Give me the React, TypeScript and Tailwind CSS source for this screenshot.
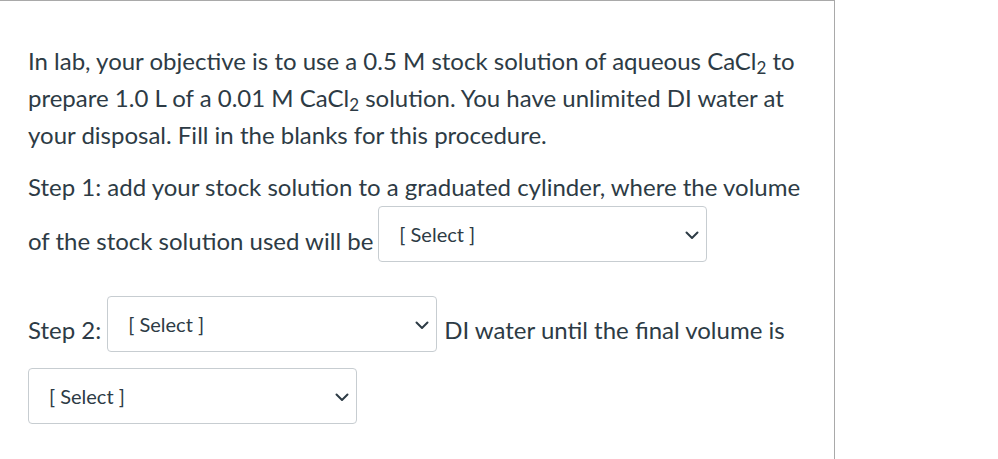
import React from 'react';

// Dropdown placeholder used for each blank in the question
const Blank: React.FC<{ className?: string }> = ({ className = '' }) => (
  <div
    className={`flex h-[56px] w-[329px] shrink-0 items-center justify-between rounded-[4px] border border-[#c7cdd1] bg-white pl-[20px] pr-[7px] text-[20px] leading-none text-[#2d3b45] ${className}`}
  >
    <span>[ Select ]</span>
    <svg width="14" height="9" viewBox="0 0 14 9" fill="none" className="mt-[2px]">
      <path d="M1.5 1.5 L7 7 L12.5 1.5" stroke="#2d3b45" strokeWidth="2" strokeLinecap="round" strokeLinejoin="round" />
    </svg>
  </div>
);

const App: React.FC = () => {
  return (
    <div className="h-[459px] w-[998px] overflow-hidden bg-white font-['Lato',sans-serif] text-[24px] leading-[37px] text-[#2d3b45]">
      <div className="h-[459px] w-[835px] border-t border-r border-[#a9a9a9] pl-[28px] pr-[26px] pt-[41px]">
        {/* Question text */}
        <p className="mb-[15px]">
          In lab, your objective is to use a 0.5 M stock solution of aqueous CaCl
          <sub className="text-[17px] leading-none">2</sub> to prepare 1.0 L of a 0.01 M CaCl
          <sub className="text-[17px] leading-none">2</sub> solution. You have unlimited DI water at your
          disposal. Fill in the blanks for this procedure.
        </p>

        {/* Step 1 */}
        <div>
          <div>Step 1: add your stock solution to a graduated cylinder, where the volume</div>
          <div className="mt-[1px] flex items-center">
            <span className="mt-[12px]">of the stock solution used will be</span>
            <Blank className="ml-[5px]" />
          </div>
        </div>

        {/* Step 2 */}
        <div className="mt-[34px] flex items-center">
          <span className="mt-[10px]">Step 2:</span>
          <Blank className="ml-[6px] w-[330px]" />
          <span className="ml-[7px] mt-[10px]">DI water until the final volume is</span>
        </div>

        <Blank className="mt-[16px]" />
      </div>
    </div>
  );
};

export default App;
